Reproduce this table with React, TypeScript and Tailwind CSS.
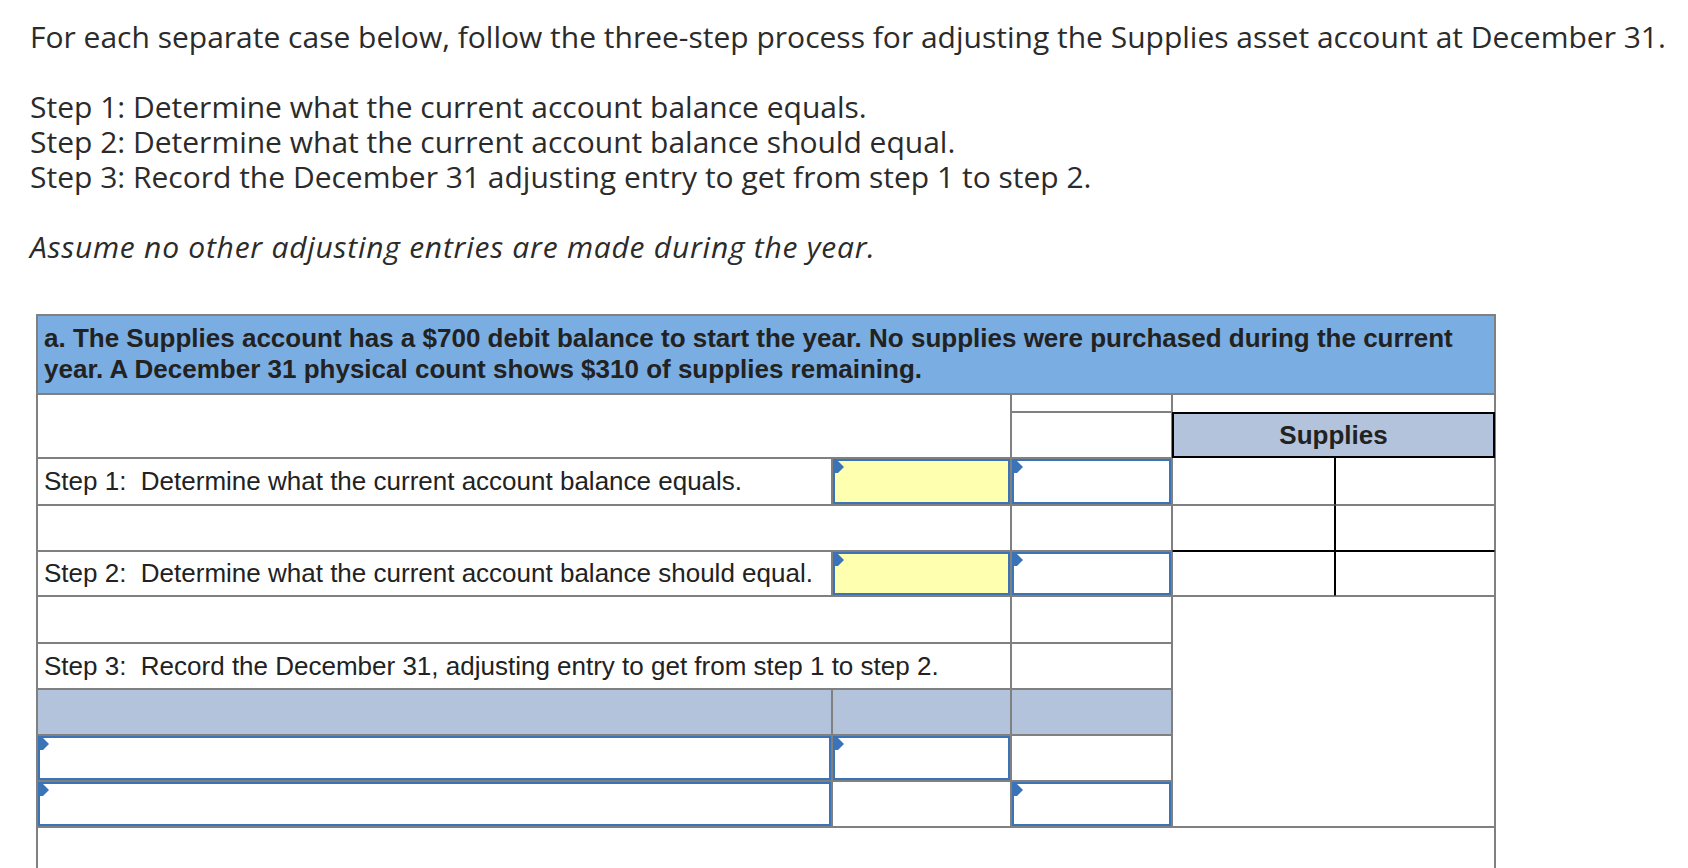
const Arrow = () => (
  <svg className="absolute left-0 top-0" width="9" height="12" viewBox="0 0 9 12">
    <path d="M0 0H3L9 6L3 12H0Z" fill="#3b73b9" />
  </svg>
);

const Entry = ({ yellow = false }: { yellow?: boolean }) => (
  <div
    className={`relative h-full w-full border-2 border-[#3b73b9] ${
      yellow ? 'bg-[#ffffb0]' : 'bg-white'
    }`}
  >
    <Arrow />
  </div>
);

const cell = 'border border-[#808080]';
const textCell = `${cell} flex items-center px-[6px] whitespace-pre`;

const App = () => {
  return (
    <div className="min-h-screen bg-white">
      <div
        className="pl-[30px] pt-[19px] text-[30px] leading-[35px] text-[#2b2b2b]"
        style={{ fontFamily: '"Open Sans", sans-serif' }}
      >
        <p className="mb-[35px]">
          For each separate case below, follow the three-step process for adjusting the Supplies asset account at December 31.
        </p>
        <p>Step 1: Determine what the current account balance equals.</p>
        <p>Step 2: Determine what the current account balance should equal.</p>
        <p className="mb-[35px]">Step 3: Record the December 31 adjusting entry to get from step 1 to step 2.</p>
        <p className="italic tracking-[0.75px]">Assume no other adjusting entries are made during the year.</p>
      </div>

      <div
        className="ml-[36px] mt-[50px] grid w-[1460px] grid-cols-[795px_179px_161px_163px_160px] grid-rows-[79px_18px_46px_47px_46px_45px_47px_46px_46px_46px_46px_80px] border border-[#808080] text-[26px] leading-[31px] text-[#222]"
        style={{ fontFamily: '"Liberation Sans", Arial, sans-serif' }}
      >
        {/* case header */}
        <div className={`${cell} col-span-5 bg-[#7aade1] px-[6px] pt-[7px] font-bold`}>
          a. The Supplies account has a $700 debit balance to start the year. No supplies were purchased during the current
          year. A December 31 physical count shows $310 of supplies remaining.
        </div>

        {/* top blank + T account header */}
        <div className={`${cell} col-span-2 row-span-2`} />
        <div className={cell} />
        <div className={`${cell} col-span-2 border-b-0`} />
        <div className={cell} />
        <div className="col-span-2 flex items-center justify-center border-2 border-black bg-[#b3c3db] font-bold">
          Supplies
        </div>

        {/* step 1 */}
        <div className={textCell}>Step 1:  Determine what the current account balance equals.</div>
        <div className={cell}>
          <Entry yellow />
        </div>
        <div className={cell}>
          <Entry />
        </div>
        <div className={`${cell} border-t-0 border-r-black`} />
        <div className={`${cell} border-t-0 border-l-black`} />

        {/* blank */}
        <div className={`${cell} col-span-2`} />
        <div className={cell} />
        <div className={`${cell} border-r-black border-b-black`} />
        <div className={`${cell} border-l-black border-b-black`} />

        {/* step 2 */}
        <div className={textCell}>Step 2:  Determine what the current account balance should equal.</div>
        <div className={cell}>
          <Entry yellow />
        </div>
        <div className={cell}>
          <Entry />
        </div>
        <div className={`${cell} border-t-black border-r-black`} />
        <div className={`${cell} border-t-black border-l-black`} />

        {/* blank */}
        <div className={`${cell} col-span-2`} />
        <div className={cell} />
        <div className={`${cell} col-span-2 row-span-5`} />

        {/* step 3 */}
        <div className={`${textCell} col-span-2`}>
          Step 3:  Record the December 31, adjusting entry to get from step 1 to step 2.
        </div>
        <div className={cell} />

        {/* journal header */}
        <div className={`${cell} bg-[#b3c3db]`} />
        <div className={`${cell} bg-[#b3c3db]`} />
        <div className={`${cell} bg-[#b3c3db]`} />

        {/* journal lines */}
        <div className={cell}>
          <Entry />
        </div>
        <div className={cell}>
          <Entry />
        </div>
        <div className={cell} />

        <div className={cell}>
          <Entry />
        </div>
        <div className={cell} />
        <div className={cell}>
          <Entry />
        </div>

        <div className={`${cell} col-span-5`} />
      </div>
    </div>
  );
};

export default App;
